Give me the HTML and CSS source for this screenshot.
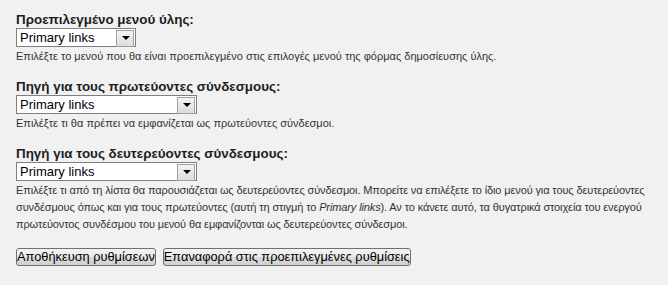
FILE: index.html
```html
<!DOCTYPE html>
<html lang="el">
<head>
  <meta charset="UTF-8">
  <title>Ρυθμίσεις μενού</title>
  <link rel="stylesheet" href="styles.css">
</head>
<body>
  <form class="menu-settings">
    <!-- Default menu -->
    <div class="form-item">
      <label for="menu-default">Προεπιλεγμένο μενού ύλης:</label>
      <span class="select-wrap short">
        <select id="menu-default"><option>Primary links</option></select>
      </span>
      <div class="description">Επιλέξτε το μενού που θα είναι προεπιλεγμένο στις επιλογές μενού της φόρμας δημοσίευσης ύλης.</div>
    </div>

    <!-- Primary links source -->
    <div class="form-item">
      <label for="menu-primary">Πηγή για τους πρωτεύοντες σύνδεσμους:</label>
      <span class="select-wrap">
        <select id="menu-primary"><option>Primary links</option></select>
      </span>
      <div class="description">Επιλέξτε τι θα πρέπει να εμφανίζεται ως πρωτεύοντες σύνδεσμοι.</div>
    </div>

    <!-- Secondary links source -->
    <div class="form-item">
      <label for="menu-secondary">Πηγή για τους δευτερεύοντες σύνδεσμους:</label>
      <span class="select-wrap">
        <select id="menu-secondary"><option>Primary links</option></select>
      </span>
      <div class="description long">Επιλέξτε τι από τη λίστα θα παρουσιάζεται ως δευτερεύοντες σύνδεσμοι. Μπορείτε να επιλέξετε το ίδιο μενού για τους δευτερεύοντες συνδέσμους όπως και για τους πρωτεύοντες (αυτή τη στιγμή το <em>Primary links</em>). Αν το κάνετε αυτό, τα θυγατρικά στοιχεία του ενεργού πρωτεύοντος συνδέσμου του μενού θα εμφανίζονται ως δευτερεύοντες σύνδεσμοι.</div>
    </div>

    <div class="form-actions">
      <button type="submit">Αποθήκευση ρυθμίσεων</button>
      <button type="reset">Επαναφορά στις προεπιλεγμένες ρυθμίσεις</button>
    </div>
  </form>
</body>
</html>
```

FILE: styles.css
```css
/* Base */
* { box-sizing: border-box; }
body {
  margin: 0;
  padding: 11px 3px 0 16px;
  background: #f1f1f1;
  color: #222;
  font-family: "Liberation Sans", Arial, sans-serif;
}

/* Form items */
.form-item {
  margin-bottom: 13px;
}
.form-item label {
  display: block;
  font-size: 13.4px;
  font-weight: bold;
  line-height: 17px;
  color: #1e1e1e;
}

/* Select with a classic drop-down button */
.select-wrap {
  position: relative;
  display: block;
  width: 120px;
  height: 19px;
}
.select-wrap:not(.short) {
  width: 181px;
}
.select-wrap select {
  appearance: none;
  -webkit-appearance: none;
  width: 100%;
  height: 19px;
  margin: 0;
  padding: 0 18px 0 3px;
  border: 1px solid #7f7f7f;
  border-radius: 0;
  background: #fff;
  color: #000;
  font-family: inherit;
  font-size: 13px;
  line-height: 17px;
}
.select-wrap::after {
  content: "";
  position: absolute;
  top: 2px;
  right: 2px;
  width: 16px;
  height: 15px;
  border: 1px solid #a0a0a0;
  background: linear-gradient(#f4f4f4, #dcdcdc);
  pointer-events: none;
}
.select-wrap::before {
  content: "";
  position: absolute;
  top: 8px;
  right: 6px;
  z-index: 1;
  border-left: 4px solid transparent;
  border-right: 4px solid transparent;
  border-top: 4px solid #000;
  pointer-events: none;
}

.description {
  font-size: 11px;
  line-height: 17px;
  color: #333;
  margin-top: 1px;
}
.description.long {
  letter-spacing: -0.12px;
}

/* Buttons */
.form-actions {
  display: flex;
  gap: 7px;
  margin-top: 15px;
}
.form-actions button {
  height: 18px;
  padding: 0;
  border: 1px solid #707070;
  border-radius: 3px;
  background: linear-gradient(#f2f2f2 0%, #ebebeb 50%, #dddddd 51%, #cfcfcf 100%);
  color: #000;
  font-family: inherit;
  font-size: 12.8px;
  line-height: 16px;
}
```
